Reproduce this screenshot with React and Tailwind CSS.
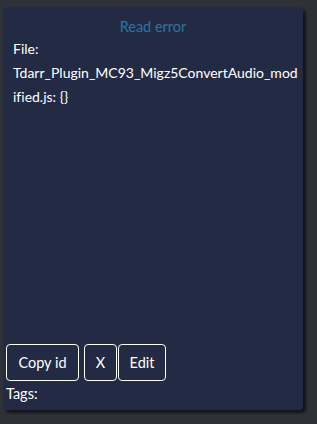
export default function App() {
  return (
    <div className="min-h-[424px] w-[317px] bg-[#2e3138] pt-[7px] pl-[3px]" style={{ fontFamily: 'Lato, "Open Sans", sans-serif' }}>
      <div className="w-[300px] h-[403px] bg-[#232b44] rounded-[4px] shadow-[3px_3px_3px_rgba(0,0,0,0.6)] flex flex-col px-[3px] pt-[10px] pb-[6px] text-white text-[14.5px] [font-variant-ligatures:none]">
        <div className="text-center text-[#2a74a0] leading-[20px]">Read error</div>
        <div className="pl-[7px] pr-0 leading-[24px] text-[14px] [overflow-wrap:anywhere]">
          File: Tdarr_Plugin_MC93_Migz5ConvertAudio_modified.js: {'{}'}
        </div>
        <div className="flex-1" />
        <div className="flex items-center">
          <button className="h-[37px] w-[73px] border border-white rounded-[4px]">Copy id</button>
          <button className="h-[37px] w-[33px] ml-[5px] border border-white rounded-[4px]">X</button>
          <button className="h-[37px] w-[48px] ml-[1px] border border-white rounded-[4px]">Edit</button>
        </div>
        <div className="leading-[20px] mt-[3px]">Tags:</div>
      </div>
    </div>
  )
}
